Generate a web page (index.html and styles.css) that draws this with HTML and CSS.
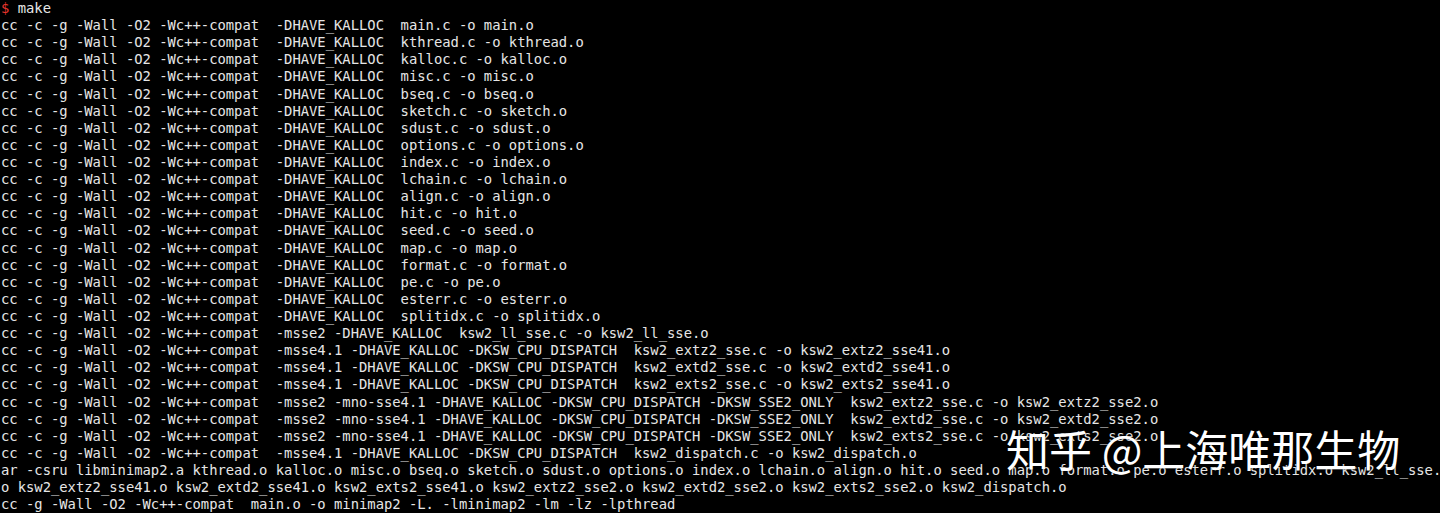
FILE: index.html
```html
<!DOCTYPE html>
<html lang="zh">
<head>
<meta charset="utf-8">
<title>make</title>
<link rel="stylesheet" href="styles.css">
</head>
<body>
<main class="term">
<div class="line"><span class="prompt">$</span> make</div>
<div class="line">cc -c -g -Wall -O2 -Wc++-compat  -DHAVE_KALLOC  main.c -o main.o</div>
<div class="line">cc -c -g -Wall -O2 -Wc++-compat  -DHAVE_KALLOC  kthread.c -o kthread.o</div>
<div class="line">cc -c -g -Wall -O2 -Wc++-compat  -DHAVE_KALLOC  kalloc.c -o kalloc.o</div>
<div class="line">cc -c -g -Wall -O2 -Wc++-compat  -DHAVE_KALLOC  misc.c -o misc.o</div>
<div class="line">cc -c -g -Wall -O2 -Wc++-compat  -DHAVE_KALLOC  bseq.c -o bseq.o</div>
<div class="line">cc -c -g -Wall -O2 -Wc++-compat  -DHAVE_KALLOC  sketch.c -o sketch.o</div>
<div class="line">cc -c -g -Wall -O2 -Wc++-compat  -DHAVE_KALLOC  sdust.c -o sdust.o</div>
<div class="line">cc -c -g -Wall -O2 -Wc++-compat  -DHAVE_KALLOC  options.c -o options.o</div>
<div class="line">cc -c -g -Wall -O2 -Wc++-compat  -DHAVE_KALLOC  index.c -o index.o</div>
<div class="line">cc -c -g -Wall -O2 -Wc++-compat  -DHAVE_KALLOC  lchain.c -o lchain.o</div>
<div class="line">cc -c -g -Wall -O2 -Wc++-compat  -DHAVE_KALLOC  align.c -o align.o</div>
<div class="line">cc -c -g -Wall -O2 -Wc++-compat  -DHAVE_KALLOC  hit.c -o hit.o</div>
<div class="line">cc -c -g -Wall -O2 -Wc++-compat  -DHAVE_KALLOC  seed.c -o seed.o</div>
<div class="line">cc -c -g -Wall -O2 -Wc++-compat  -DHAVE_KALLOC  map.c -o map.o</div>
<div class="line">cc -c -g -Wall -O2 -Wc++-compat  -DHAVE_KALLOC  format.c -o format.o</div>
<div class="line">cc -c -g -Wall -O2 -Wc++-compat  -DHAVE_KALLOC  pe.c -o pe.o</div>
<div class="line">cc -c -g -Wall -O2 -Wc++-compat  -DHAVE_KALLOC  esterr.c -o esterr.o</div>
<div class="line">cc -c -g -Wall -O2 -Wc++-compat  -DHAVE_KALLOC  splitidx.c -o splitidx.o</div>
<div class="line">cc -c -g -Wall -O2 -Wc++-compat  -msse2 -DHAVE_KALLOC  ksw2_ll_sse.c -o ksw2_ll_sse.o</div>
<div class="line">cc -c -g -Wall -O2 -Wc++-compat  -msse4.1 -DHAVE_KALLOC -DKSW_CPU_DISPATCH  ksw2_extz2_sse.c -o ksw2_extz2_sse41.o</div>
<div class="line">cc -c -g -Wall -O2 -Wc++-compat  -msse4.1 -DHAVE_KALLOC -DKSW_CPU_DISPATCH  ksw2_extd2_sse.c -o ksw2_extd2_sse41.o</div>
<div class="line">cc -c -g -Wall -O2 -Wc++-compat  -msse4.1 -DHAVE_KALLOC -DKSW_CPU_DISPATCH  ksw2_exts2_sse.c -o ksw2_exts2_sse41.o</div>
<div class="line">cc -c -g -Wall -O2 -Wc++-compat  -msse2 -mno-sse4.1 -DHAVE_KALLOC -DKSW_CPU_DISPATCH -DKSW_SSE2_ONLY  ksw2_extz2_sse.c -o ksw2_extz2_sse2.o</div>
<div class="line">cc -c -g -Wall -O2 -Wc++-compat  -msse2 -mno-sse4.1 -DHAVE_KALLOC -DKSW_CPU_DISPATCH -DKSW_SSE2_ONLY  ksw2_extd2_sse.c -o ksw2_extd2_sse2.o</div>
<div class="line">cc -c -g -Wall -O2 -Wc++-compat  -msse2 -mno-sse4.1 -DHAVE_KALLOC -DKSW_CPU_DISPATCH -DKSW_SSE2_ONLY  ksw2_exts2_sse.c -o ksw2_exts2_sse2.o</div>
<div class="line">cc -c -g -Wall -O2 -Wc++-compat  -msse4.1 -DHAVE_KALLOC -DKSW_CPU_DISPATCH  ksw2_dispatch.c -o ksw2_dispatch.o</div>
<div class="line">ar -csru libminimap2.a kthread.o kalloc.o misc.o bseq.o sketch.o sdust.o options.o index.o lchain.o align.o hit.o seed.o map.o format.o pe.o esterr.o splitidx.o ksw2_ll_sse.</div>
<div class="line">o ksw2_extz2_sse41.o ksw2_extd2_sse41.o ksw2_exts2_sse41.o ksw2_extz2_sse2.o ksw2_extd2_sse2.o ksw2_exts2_sse2.o ksw2_dispatch.o</div>
<div class="line">cc -g -Wall -O2 -Wc++-compat  main.o -o minimap2 -L. -lminimap2 -lm -lz -lpthread</div>
</main>
<div class="watermark">知乎 @上海唯那生物</div>
</body>
</html>
```

FILE: styles.css
```css
html, body {
  margin: 0;
  padding: 0;
  background: #000;
  width: 1440px;
  height: 513px;
  overflow: hidden;
}

body {
  position: relative;
}

.term {
  display: flex;
  flex-direction: column;
  padding: 0 0 0 1px;
  font-family: "DejaVu Sans Mono", monospace;
  font-size: 13.83px;
  line-height: 17.12px;
  color: #e6e6e6;
}

.line {
  white-space: pre;
  height: 17.12px;
}

.prompt {
  color: #e8342c;
}

.watermark {
  position: absolute;
  left: 1006px;
  top: 420px;
  font-family: "Noto Sans CJK SC", sans-serif;
  font-size: 43px;
  line-height: 56px;
  color: #fff;
  white-space: pre;
  text-shadow: 0 0 2px rgba(0, 0, 0, 0.7);
}
```
